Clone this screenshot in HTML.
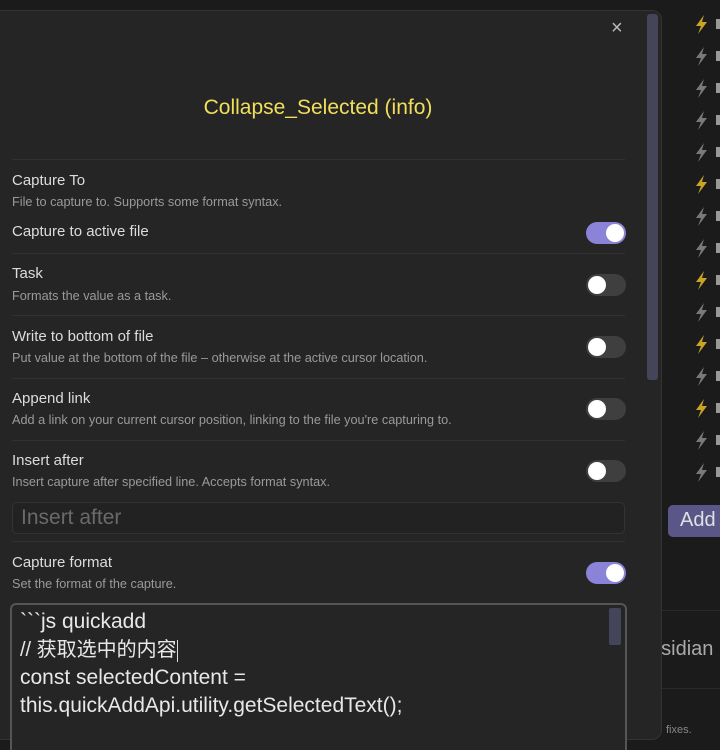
<!DOCTYPE html>
<html style="width:720px;height:750px;overflow:hidden"><head><meta charset="utf-8"><style>
*{margin:0;padding:0;box-sizing:border-box}
body{width:720px;height:750px;background:#1b1b1b;position:relative;overflow:hidden;font-family:"Liberation Sans","Noto Sans CJK SC",sans-serif;color:#dadada}
.abs{position:absolute}
.modal{left:-10px;top:10px;width:672px;height:730px;background:#252525;border:1px solid #333;border-radius:10px}
.t{font-size:15px;color:#dcdcdc}
.d{font-size:12.7px;color:#9a9a9a}
.hr{height:1px;background:#313131;left:12px;width:613px}
.tg{width:40px;height:22px;border-radius:11px;background:#3f3f3f;left:586px}
.tg::after{content:"";position:absolute;left:2px;top:2px;width:18px;height:18px;border-radius:50%;background:#fff}
.tg.on{background:#8a83d8}
.tg.on::after{left:20px}
.code{left:20px;font-size:21px;line-height:28px;color:#e8e8e8;white-space:nowrap}
</style></head><body>
<svg class="abs" style="left:692px;top:0" width="28" height="500">
<g id="bolts">
<path d="M12 15 L4 26 L9 26 L6 34 L15 22 L10 22 Z" fill="#c9a227"/>
<path d="M12 47 L4 58 L9 58 L6 66 L15 54 L10 54 Z" fill="#7a7a7a"/>
<path d="M12 79 L4 90 L9 90 L6 98 L15 86 L10 86 Z" fill="#7a7a7a"/>
<path d="M12 111 L4 122 L9 122 L6 130 L15 118 L10 118 Z" fill="#7a7a7a"/>
<path d="M12 143 L4 154 L9 154 L6 162 L15 150 L10 150 Z" fill="#7a7a7a"/>
<path d="M12 175 L4 186 L9 186 L6 194 L15 182 L10 182 Z" fill="#c9a227"/>
<path d="M12 207 L4 218 L9 218 L6 226 L15 214 L10 214 Z" fill="#7a7a7a"/>
<path d="M12 239 L4 250 L9 250 L6 258 L15 246 L10 246 Z" fill="#7a7a7a"/>
<path d="M12 271 L4 282 L9 282 L6 290 L15 278 L10 278 Z" fill="#c9a227"/>
<path d="M12 303 L4 314 L9 314 L6 322 L15 310 L10 310 Z" fill="#7a7a7a"/>
<path d="M12 335 L4 346 L9 346 L6 354 L15 342 L10 342 Z" fill="#c9a227"/>
<path d="M12 367 L4 378 L9 378 L6 386 L15 374 L10 374 Z" fill="#7a7a7a"/>
<path d="M12 399 L4 410 L9 410 L6 418 L15 406 L10 406 Z" fill="#c9a227"/>
<path d="M12 431 L4 442 L9 442 L6 450 L15 438 L10 438 Z" fill="#7a7a7a"/>
<path d="M12 463 L4 474 L9 474 L6 482 L15 470 L10 470 Z" fill="#7a7a7a"/>
</g>
<g fill="#999"><rect x="24" y="19" width="4" height="10"/><rect x="24" y="51" width="4" height="10"/><rect x="24" y="83" width="4" height="10"/><rect x="24" y="115" width="4" height="10"/><rect x="24" y="147" width="4" height="10"/><rect x="24" y="179" width="4" height="10"/><rect x="24" y="211" width="4" height="10"/><rect x="24" y="243" width="4" height="10"/><rect x="24" y="275" width="4" height="10"/><rect x="24" y="307" width="4" height="10"/><rect x="24" y="339" width="4" height="10"/><rect x="24" y="371" width="4" height="10"/><rect x="24" y="403" width="4" height="10"/><rect x="24" y="435" width="4" height="10"/><rect x="24" y="467" width="4" height="10"/></g>
</svg>
<div class="abs" style="left:668px;top:505px;width:70px;height:32px;background:#5a5688;border-radius:5px;font-size:20px;color:#e0e0e0;padding:4px 12px">Add</div>
<div class="abs" style="left:662px;top:610px;width:58px;height:1px;background:#2a2a2a"></div>
<div class="abs" style="left:650px;top:638px;font-size:20px;color:#aaa">osidian</div>
<div class="abs" style="left:662px;top:688px;width:58px;height:1px;background:#2a2a2a"></div>
<div class="abs" style="left:666px;top:724px;font-size:11px;color:#888">fixes.</div>

<div class="abs modal"></div>
<div class="abs" style="left:647px;top:14px;width:11px;height:366px;background:#45455a;border-radius:3px"></div>
<div class="abs" style="left:611px;top:18px;font-size:20px;color:#bbb;line-height:20px">×</div>
<div class="abs" style="left:0;width:636px;top:96px;text-align:center;font-size:21px;color:#f1df5b">Collapse_Selected (info)</div>
<div class="abs hr" style="top:159px"></div>
<div class="abs t" style="left:12px;top:172px">Capture To</div>
<div class="abs d" style="left:12px;top:195px">File to capture to. Supports some format syntax.</div>
<div class="abs t" style="left:12px;top:223px">Capture to active file</div>
<div class="abs tg on" style="top:222px"></div>
<div class="abs hr" style="top:253px"></div>
<div class="abs t" style="left:12px;top:265px">Task</div>
<div class="abs d" style="left:12px;top:289px">Formats the value as a task.</div>
<div class="abs tg" style="top:274px"></div>
<div class="abs hr" style="top:315px"></div>
<div class="abs t" style="left:12px;top:328px">Write to bottom of file</div>
<div class="abs d" style="left:12px;top:351px">Put value at the bottom of the file – otherwise at the active cursor location.</div>
<div class="abs tg" style="top:336px"></div>
<div class="abs hr" style="top:378px"></div>
<div class="abs t" style="left:12px;top:390px">Append link</div>
<div class="abs d" style="left:12px;top:413px">Add a link on your current cursor position, linking to the file you're capturing to.</div>
<div class="abs tg" style="top:398px"></div>
<div class="abs hr" style="top:440px"></div>
<div class="abs t" style="left:12px;top:452px">Insert after</div>
<div class="abs d" style="left:12px;top:475px">Insert capture after specified line. Accepts format syntax.</div>
<div class="abs tg" style="top:460px"></div>
<div class="abs" style="left:12px;top:502px;width:613px;height:32px;border:1px solid #333;border-radius:5px;background:#222;font-size:21px;line-height:30px;color:#6a6a6a;padding:0 8px">Insert after</div>
<div class="abs hr" style="top:541px"></div>
<div class="abs t" style="left:12px;top:554px">Capture format</div>
<div class="abs d" style="left:12px;top:577px">Set the format of the capture.</div>
<div class="abs tg on" style="top:562px"></div>
<div class="abs" style="left:10px;top:603px;width:617px;height:160px;border:2px solid #555;border-radius:6px;background:#252525"></div>
<div class="abs" style="left:609px;top:608px;width:12px;height:37px;background:#45455a;border-radius:2px"></div>
<div class="abs code" style="top:608px">&#96;&#96;&#96;js quickadd</div>
<div class="abs code" style="top:636px;font-size:20px">// 获取选中的内容<span style="display:inline-block;width:1px;height:22px;background:#ddd;vertical-align:middle"></span></div>
<div class="abs code" style="top:664px">const selectedContent =</div>
<div class="abs code" style="top:692px">this.quickAddApi.utility.getSelectedText();</div>
</body></html>
